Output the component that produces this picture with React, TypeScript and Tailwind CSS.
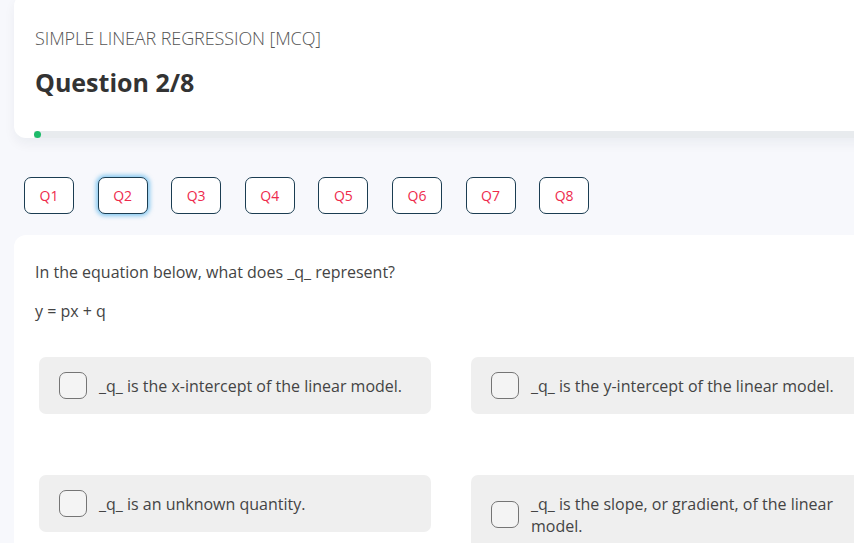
import React from 'react';

const questions = ['Q1', 'Q2', 'Q3', 'Q4', 'Q5', 'Q6', 'Q7', 'Q8'];

const options = [
  '_q_ is the x-intercept of the linear model.',
  '_q_ is the y-intercept of the linear model.',
  '_q_ is an unknown quantity.',
  '_q_ is the slope, or gradient, of the linear model.',
];

export default function App() {
  return (
    <div
      className="w-[854px] h-[543px] overflow-hidden bg-[#f7f8fc] pl-[14px]"
      style={{ fontFamily: '"Open Sans", "Liberation Sans", sans-serif' }}
    >
      <div className="w-[900px]">
        {/* Header card */}
        <div className="-mt-[6px] bg-white rounded-xl overflow-hidden shadow-[0_6px_12px_rgba(20,30,60,0.05)]">
          <div className="pl-[21px] pt-[32px] pb-[33px]">
            <p className="text-[18px] leading-[24px] font-light text-[#555] tracking-[-0.1px]">
              SIMPLE LINEAR REGRESSION [MCQ]
            </p>
            <h1 className="mt-[16px] text-[25px] leading-[32px] font-bold text-[#333]">Question 2/8</h1>
          </div>
          <div className="ml-[20px] h-[7px] bg-[#e8ebee] flex">
            <div className="w-[7px] h-[7px] rounded-full bg-[#1dbb6a]" />
          </div>
        </div>

        {/* Question nav */}
        <div className="mt-[39px] ml-[10px] flex gap-[23.6px]">
          {questions.map((q) => (
            <button
              key={q}
              className={`w-[50px] h-[37px] rounded-[7px] border-[1.5px] border-[#1b3d52] bg-white text-[14px] text-[#ee2a4c] flex items-center justify-center ${
                q === 'Q2' ? 'shadow-[0_0_4px_2px_rgba(40,160,230,0.55)]' : ''
              }`}
            >
              {q}
            </button>
          ))}
        </div>

        {/* Question card */}
        <div className="mt-[21px] bg-white rounded-xl pl-[21px] pr-[25px] pt-[26px] pb-[30px]">
          <p className="text-[16px] leading-[22px] text-[#444]">In the equation below, what does _q_ represent?</p>
          <p className="mt-[17px] text-[16px] leading-[22px] text-[#444]">y = px + q</p>
          <div className="mt-[35px] ml-[4px] grid grid-cols-[392px_392px] gap-x-[40px] gap-y-[61px] items-start">
            {options.map((o) => (
              <label
                key={o}
                className="flex items-center gap-[12px] bg-[#efefef] rounded-[7px] pl-[20px] pr-[24px] py-[17.5px] cursor-pointer"
              >
                <span className="shrink-0 -my-[3px] w-[28px] h-[27px] rounded-[7px] border-[1.5px] border-[#757575] bg-white/30" />
                <span className="text-[16px] leading-[22px] text-[#444]">{o}</span>
              </label>
            ))}
          </div>
        </div>
      </div>
    </div>
  );
}
